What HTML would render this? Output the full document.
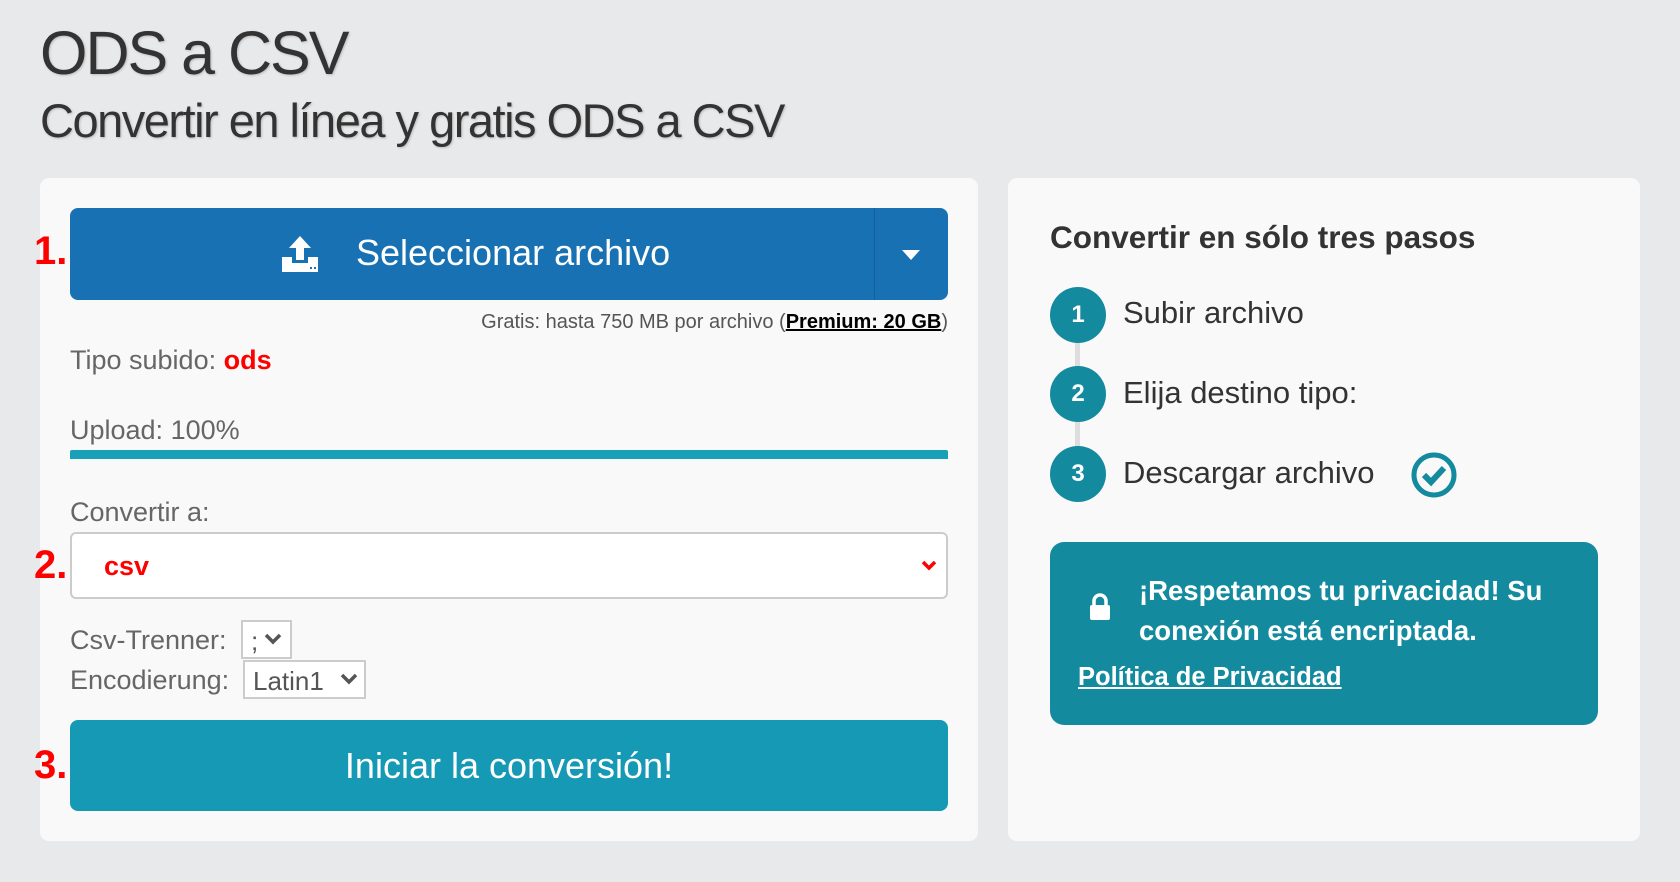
<!DOCTYPE html>
<html><head><meta charset="utf-8"><style>
*{box-sizing:border-box;margin:0;padding:0}
body{width:1680px;height:882px;background:#e8e9eb;font-family:"Liberation Sans",Arial,sans-serif;position:relative;overflow:hidden;color:#333}
.a{position:absolute;white-space:nowrap}
h1{position:absolute;left:40px;top:18px;font-size:61px;font-weight:normal;letter-spacing:-2px;color:#333;text-shadow:1px 1px 2px #bbb}
h2{position:absolute;left:40px;top:93px;font-size:47px;font-weight:normal;letter-spacing:-1.5px;color:#333;text-shadow:1px 1px 2px #bbb}
.card{position:absolute;background:#f9f9f9;border-radius:9px;top:178px;height:663px}
.num{position:absolute;color:#f00;font-weight:bold;font-size:40px}
.lbl{color:#666;font-size:27px}
.circ{position:absolute;left:1050px;width:56px;height:56px;border-radius:50%;background:#148a9f;color:#fff;font-weight:bold;font-size:24px;text-align:center;line-height:56px}
.step{position:absolute;left:1123px;font-size:31px;color:#333}
</style></head><body>
<h1>ODS a CSV</h1>
<h2>Convertir en línea y gratis ODS a CSV</h2>

<div class="card" style="left:40px;width:938px"></div>
<div class="card" style="left:1008px;width:632px"></div>

<div class="num" style="left:34px;top:229px">1.</div>
<div class="a" style="left:70px;top:208px;width:878px;height:92px;background:#1771b3;border-radius:8px"></div>
<div class="a" style="left:874px;top:208px;width:1px;height:92px;background:#135f98"></div>
<svg class="a" style="left:282px;top:236px" width="36" height="36" viewBox="0 0 36 36"><path d="M18 0 L29 12 H22 V24 H14 V12 H7 Z" fill="#fff"/><path d="M0 21 H10 V27 H26 V21 H36 V36 H0 Z" fill="#fff"/><rect x="28" y="31" width="2" height="2" fill="#1771b3"/><rect x="32" y="31" width="2" height="2" fill="#1771b3"/></svg>
<div class="a" style="left:356px;top:232px;font-size:36px;color:#fff">Seleccionar archivo</div>
<svg class="a" style="left:902px;top:250px" width="18" height="10"><path d="M0 0H18L9 10Z" fill="#fff"/></svg>

<div class="a" style="right:732px;top:311px;font-size:20px;color:#555">Gratis: hasta 750 MB por archivo (<b style="color:#000;text-decoration:underline">Premium: 20 GB</b>)</div>
<div class="a lbl" style="left:70px;top:345px">Tipo subido: <b style="color:#f00">ods</b></div>
<div class="a lbl" style="left:70px;top:415px">Upload: 100%</div>
<div class="a" style="left:70px;top:450px;width:878px;height:9px;background:#17a0b8;border-radius:2px 2px 0 0"></div>
<div class="a lbl" style="left:70px;top:497px">Convertir a:</div>
<div class="num" style="left:34px;top:543px">2.</div>
<div class="a" style="left:70px;top:532px;width:878px;height:67px;background:#fff;border:2px solid #ccc;border-radius:6px"></div>
<div class="a" style="left:104px;top:551px;font-size:27px;color:#f00;font-weight:bold">csv</div>
<svg class="a" style="left:921px;top:560px" width="16" height="11"><path d="M2 2L8 8L14 2" stroke="#f00" stroke-width="3.5" fill="none"/></svg>
<div class="a lbl" style="left:70px;top:625px">Csv-Trenner:</div>
<div class="a" style="left:241px;top:620px;width:51px;height:39px;border:2px solid #ccc;background:#fff;font-size:26px;color:#555;padding:4px 0 0 8px">;</div>
<svg class="a" style="left:264px;top:633px" width="18" height="12"><path d="M2 2L9 9L16 2" stroke="#555" stroke-width="3.5" fill="none"/></svg>
<div class="a lbl" style="left:70px;top:665px">Encodierung:</div>
<div class="a" style="left:243px;top:660px;width:123px;height:39px;border:2px solid #ccc;background:#fff;font-size:26px;color:#555;padding:4px 0 0 8px">Latin1</div>
<svg class="a" style="left:340px;top:673px" width="18" height="12"><path d="M2 2L9 9L16 2" stroke="#555" stroke-width="3.5" fill="none"/></svg>
<div class="num" style="left:34px;top:743px">3.</div>
<div class="a" style="left:70px;top:720px;width:878px;height:91px;background:#1699b5;border-radius:8px;color:#fff;font-size:36px;text-align:center;line-height:91px">Iniciar la conversión!</div>

<div class="a" style="left:1050px;top:219px;font-size:31.5px;font-weight:bold;color:#333">Convertir en sólo tres pasos</div>
<div class="a" style="left:1075px;top:320px;width:5px;height:150px;background:#ddd"></div>
<div class="circ" style="top:287px">1</div>
<div class="circ" style="top:366px">2</div>
<div class="circ" style="top:446px">3</div>
<div class="step" style="top:295px">Subir archivo</div>
<div class="step" style="top:375px">Elija destino tipo:</div>
<div class="step" style="top:455px">Descargar archivo</div>
<svg class="a" style="left:1411px;top:452px" width="46" height="46" viewBox="0 0 46 46"><circle cx="23" cy="23" r="20" stroke="#148a9f" stroke-width="5" fill="none"/><path d="M13 23L20 30L33 16" stroke="#148a9f" stroke-width="6" fill="none"/></svg>

<div class="a" style="left:1050px;top:542px;width:548px;height:183px;background:#148a9f;border-radius:14px"></div>
<svg class="a" style="left:1089px;top:593px" width="22" height="28" viewBox="0 0 22 28"><path d="M5 13V8a6 6 0 0 1 12 0v5" stroke="#fff" stroke-width="3.5" fill="none"/><rect x="1" y="12" width="20" height="15" rx="2" fill="#fff"/></svg>
<div class="a" style="left:1139px;top:571px;font-size:27.5px;font-weight:bold;color:#fff;line-height:40px">¡Respetamos tu privacidad! Su<br>conexión está encriptada.</div>
<div class="a" style="left:1078px;top:663px;font-size:25.5px;font-weight:bold;color:#fff;text-decoration:underline">Política de Privacidad</div>
</body></html>
